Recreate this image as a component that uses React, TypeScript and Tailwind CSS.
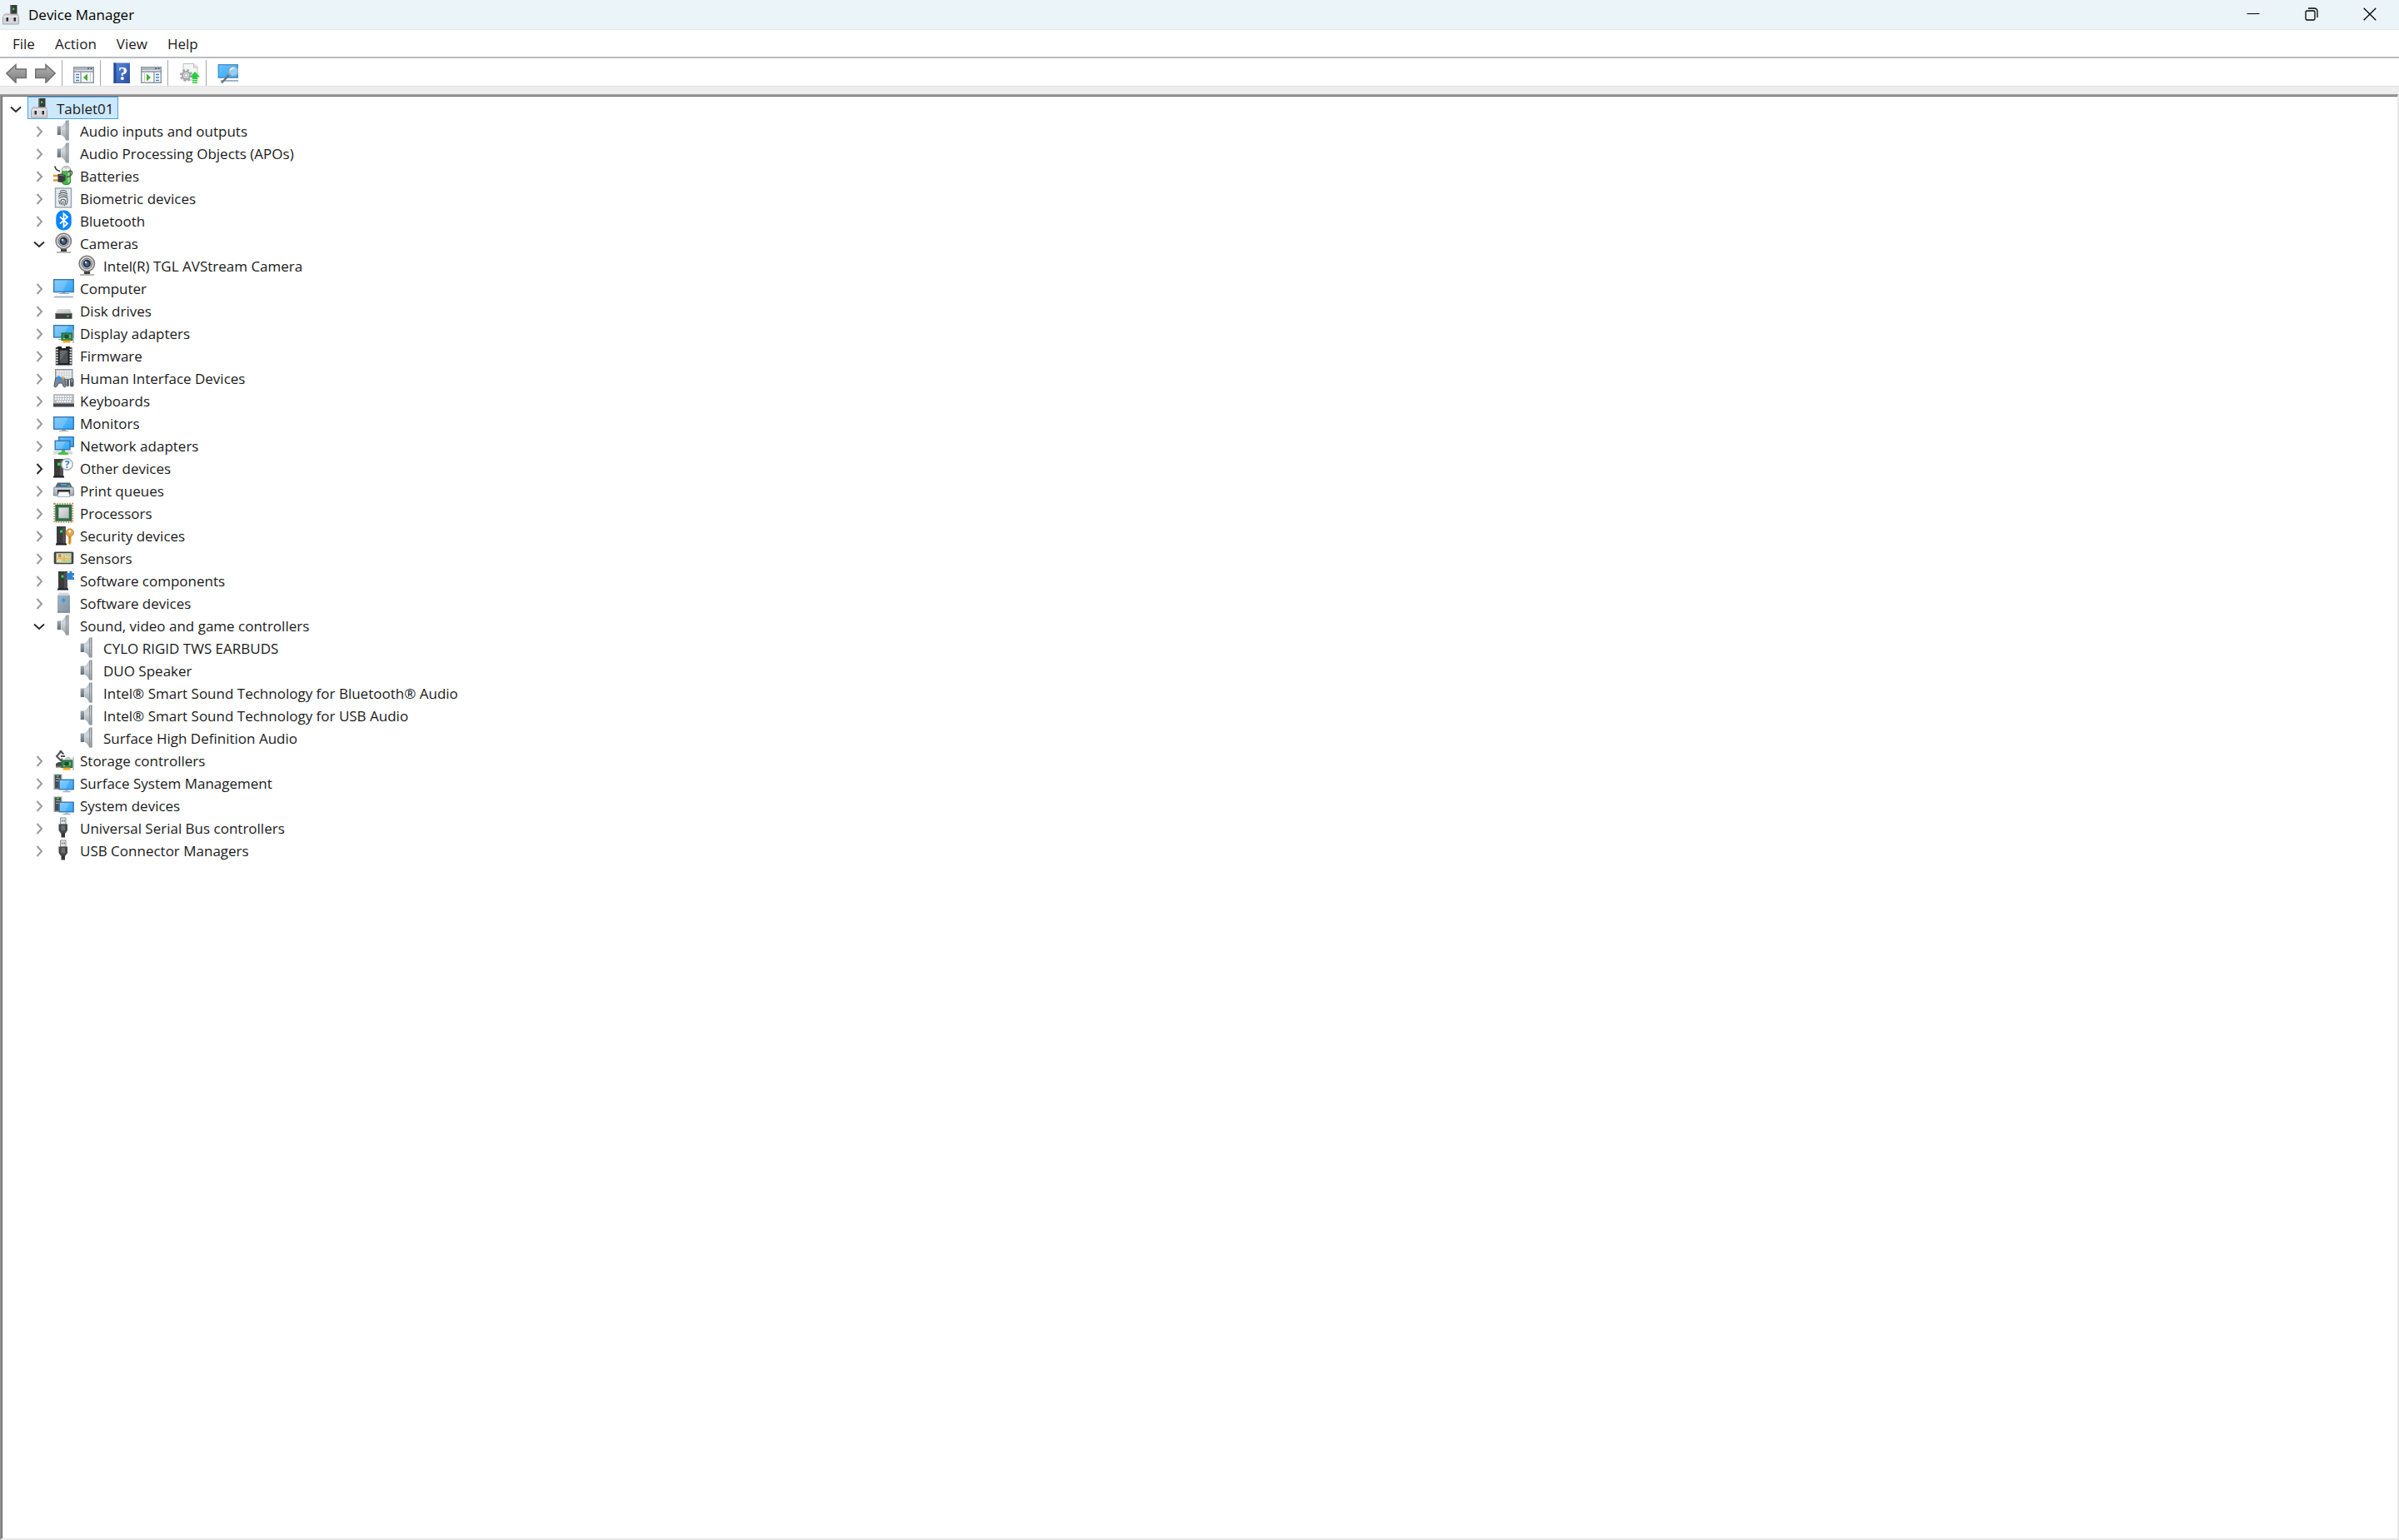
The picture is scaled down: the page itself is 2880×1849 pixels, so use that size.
import { useState } from 'react';
import type { ReactNode } from 'react';
import clsx from 'clsx';

type IconName =
  | 'root' | 'speaker' | 'battery' | 'biometric' | 'bluetooth' | 'camera' | 'computer' | 'disk'
  | 'display' | 'firmware' | 'hid' | 'keyboard' | 'monitor' | 'network' | 'other' | 'printer'
  | 'processor' | 'security' | 'sensor' | 'component' | 'software' | 'storage' | 'system' | 'usb';

type Device = {
  label: string;
  icon: IconName;
  children?: string[];
  attention?: boolean;
};

const devices: Device[] = [
  { label: 'Audio inputs and outputs',           icon: 'speaker' },
  { label: 'Audio Processing Objects (APOs)',    icon: 'speaker' },
  { label: 'Batteries',                          icon: 'battery' },
  { label: 'Biometric devices',                  icon: 'biometric' },
  { label: 'Bluetooth',                          icon: 'bluetooth' },
  { label: 'Cameras',                            icon: 'camera', children: ['Intel(R) TGL AVStream Camera'] },
  { label: 'Computer',                           icon: 'computer' },
  { label: 'Disk drives',                        icon: 'disk' },
  { label: 'Display adapters',                   icon: 'display' },
  { label: 'Firmware',                           icon: 'firmware' },
  { label: 'Human Interface Devices',            icon: 'hid' },
  { label: 'Keyboards',                          icon: 'keyboard' },
  { label: 'Monitors',                           icon: 'monitor' },
  { label: 'Network adapters',                   icon: 'network' },
  { label: 'Other devices',                      icon: 'other', attention: true },
  { label: 'Print queues',                       icon: 'printer' },
  { label: 'Processors',                         icon: 'processor' },
  { label: 'Security devices',                   icon: 'security' },
  { label: 'Sensors',                            icon: 'sensor' },
  { label: 'Software components',                icon: 'component' },
  { label: 'Software devices',                   icon: 'software' },
  {
    label: 'Sound, video and game controllers',
    icon: 'speaker',
    children: [
      'CYLO RIGID TWS EARBUDS',
      'DUO Speaker',
      'Intel® Smart Sound Technology for Bluetooth® Audio',
      'Intel® Smart Sound Technology for USB Audio',
      'Surface High Definition Audio'
    ]
  },
  { label: 'Storage controllers',                icon: 'storage' },
  { label: 'Surface System Management',          icon: 'system' },
  { label: 'System devices',                     icon: 'system' },
  { label: 'Universal Serial Bus controllers',   icon: 'usb' },
  { label: 'USB Connector Managers',             icon: 'usb' }
];

const tower = (
  <>
    <rect x="1" y="2" width="11" height="21" fill="#3b3b3d" />
    <rect x="8" y="3" width="4" height="20" fill="#505053" />
    <rect x="0" y="22.5" width="13" height="2" fill="#1d1d1f" />
  </>
);

const card = (
  <>
    <rect x="10" y="13" width="13" height="8.5" fill="#2f8a4c" stroke="#1f6338" />
    <rect x="13.5" y="15" width="5" height="4" fill="#244a38" />
    <path d="M12 19.5h2M20 15v4" stroke="#a7d8b0" />
    <rect x="11.5" y="21.5" width="9" height="3" fill="#f5a81c" />
    <path d="M24 9v16" stroke="#a9adb1" strokeWidth="1.4" />
  </>
);

const icons: Record<IconName, ReactNode> = {
  root: (
    <>
      <rect x="10" y="1" width="8.5" height="12" fill="#3a3a3c" />
      <path d="M10 1h1.5v12H10z" fill="#77797c" />
      <rect x="13" y="4.5" width="2.4" height="2.4" fill="#1be034" />
      <path d="M3.5 12h15.500l1.500 3.500v8.500H1.500v-8.500z" fill="#d6d6d9" stroke="#a6a7aa" />
      <path d="M2 15h18" stroke="#f4f4f6" />
      <path d="M5.500 16h2.500v4.500H5.500zM14.500 16h2.500v4.500h-2.500z" fill="#2e2f32" />
    </>
  ),
  speaker: (
    <>
      <rect x="4.7" y="7.5" width="5" height="10.5" fill="url(#steel)" />
      <path d="M9.500 7.500c3-1.500 4.500-4 5.500-7h3.500v24H15c-1-3-2.500-5.500-5.500-6.500z" fill="url(#cone)" />
      <path d="M15.500 1v23" stroke="#8b949c" />
      <path d="M17.800.5v24" stroke="#89929a" strokeWidth="1.4" />
      <path d="M9.500 7.500V18" stroke="#e1e5e8" strokeWidth=".7" />
    </>
  ),
  battery: (
    <>
      <rect x="10.5" y="3" width="10" height="20.5" rx="3.5" fill="#46b648" stroke="#2b8a32" />
      <path d="M10.500 7V5a5 3.500 0 0 1 10 0v2.500h-10z" fill="#e9eeec" stroke="#8c9893" />
      <ellipse cx="15.5" cy="3" rx="3.5" ry="1.4" fill="#c3ccc8" />
      <path d="M17.500 9h2v12h-2z" fill="#9be39a" />
      <path d="M2 1.500c.5 4 2 5.500 6 6" fill="none" stroke="#3d3d3d" strokeWidth="1.8" />
      <path d="M16 14.500c4 0 7-2.500 6.500-6-1-2.500-4-1.500-4 .5" fill="none" stroke="#4d4d4d" strokeWidth="1.5" />
      <path d="M0 13h6M0 18.500h6" stroke="#e3952b" strokeWidth="2.4" />
      <path d="M5.500 11l4-.5 5 2v6l-4 2.500-5-.5z" fill="#3a3a3b" />
      <path d="M7 12.500l3-.5 3 1.500" fill="none" stroke="#8b8b8c" />
    </>
  ),
  biometric: (
    <>
      <rect x="2.5" y="1" width="19" height="23" fill="#e4eaee" stroke="#93a6b3" strokeWidth="1.4" />
      <g fill="none" stroke="#54595d" strokeWidth="1.1">
        <path d="M8 5c2-2 6-2 8 0M6.500 8c3-2.500 8-2.500 10.500 0M6 11c3-3 9-3 11.500 0" />
        <path d="M6.500 13.500c3-3.500 10-3 10.500.5 0 3-.5 5-1.500 7" />
        <path d="M8 20c-1-2-1.500-3-1-4.500M9.500 21c0-2-.5-3-.5-4.500 0-3 5.500-3 5.500 0 0 2-.5 4-1 5.500M11.700 16.500v5" />
      </g>
    </>
  ),
  bluetooth: (
    <>
      <rect x="3.3" y=".5" width="18.4" height="24" rx="8.5" fill="#0a84ff" />
      <path d="M8 8.300l9 8.200-4.500 4V4.500L17 8.500l-9 8.200" fill="none" stroke="#fff" strokeWidth="1.8" />
    </>
  ),
  camera: (
    <>
      <path d="M9 19h7v4H9z" fill="#3c3c3c" />
      <path d="M4 24h17" stroke="#8e8e8e" strokeWidth="1.3" />
      <circle cx="12.3" cy="10.5" r="9.2" fill="#d9d9d9" stroke="#7a7a7a" strokeWidth="1.6" />
      <circle cx="12.3" cy="10.5" r="6.3" fill="#b9b9b9" stroke="#6c6c6c" />
      <circle cx="12.3" cy="10.5" r="4.7" fill="#27303c" />
      <circle cx="12.3" cy="10.8" r="2.6" fill="#3f679c" />
      <circle cx="11" cy="9" r="1.3" fill="#c6dcf5" />
    </>
  ),
  computer: (
    <>
      <rect x=".7" y="2.7" width="23.6" height="14.8" fill="url(#screen)" stroke="#3b76ab" strokeWidth="1.4" />
      <path d="M1.500 3.500H18l-7 13.300H1.500z" fill="#fff" opacity=".18" />
      <path d="M10.500 18.500h4M6.500 19.500h12.500" stroke="#8fa9bf" strokeWidth="1.2" />
      <path d="M1.500 22.500h22l1 2H.5z" fill="#a5b8cb" />
    </>
  ),
  disk: (
    <>
      <path d="M5 11h15l2.500 6H2.500z" fill="url(#lid)" />
      <rect x="2.5" y="16" width="20" height="6.8" fill="#3d3f41" />
      <path d="M2.500 16.500h20" stroke="#6f7173" />
      <rect x="16.5" y="18.5" width="2" height="2" fill="#2de04c" />
    </>
  ),
  display: (
    <>
      <rect x=".7" y="3.7" width="23.6" height="14.3" fill="url(#screen)" stroke="#3b76ab" strokeWidth="1.4" />
      <path d="M1.500 4.500H18l-7 12.800H1.500z" fill="#fff" opacity=".18" />
      <path d="M6 20.500h6" stroke="#8fa9bf" strokeWidth="1.2" />
      {card}
    </>
  ),
  firmware: (
    <>
      <path d="M5 2h5v2h5V2h5v22.500H5z" fill="#1f2021" />
      <path d="M4 3v21.500M21.300 3v21.500" stroke="#3b3d3f" strokeWidth="2.4" />
      <path d="M4.500 5v19M20.800 5v19" stroke="#e4e6e7" strokeWidth="2.6" strokeDasharray="1.6 1.6" />
      <path d="M7.500 6.500h10v15.500h-10z" fill="#505254" />
      <path d="M8 7h9l-9 12z" fill="#77797b" opacity=".6" />
    </>
  ),
  hid: (
    <>
      <rect x="2.5" y="2.5" width="20.5" height="12" fill="#c3c8cc" stroke="#8a9096" />
      <path d="M4.500 5.500h17M4.500 8.500h17M4.500 11.500h17" stroke="#fff" strokeWidth="1.8" strokeDasharray="2 1" />
      <path d="M1 22l1.500-8c.5-2 3-2.500 4-1h3c1-1.500 4-1 4.500 1l1 8c0 2-2 2.500-3 .5L10.500 19h-4L4 23c-1 1.500-3 1-3-1z" fill="#7d8893" stroke="#4b545d" />
      <path d="M5 10l4 1.500 1 4.500-4 1z" fill="#2b96ef" />
      <circle cx="12" cy="13" r="1.6" fill="#f5a020" />
      <rect x="15.5" y="14" width="3.5" height="9" rx="1.5" fill="#5d6771" />
      <rect x="20" y="13" width="4.5" height="10.5" rx="1.8" fill="#4f5963" />
      <path d="M22.200 14v4" stroke="#c4ccd3" />
    </>
  ),
  keyboard: (
    <>
      <rect x="0" y="5" width="25" height="13" fill="#b9bec3" />
      <path d="M2 8h21M2 11h21M4 14h17" stroke="#f7f8f9" strokeWidth="2" strokeDasharray="2 1" />
      <rect x="0" y="16.5" width="25" height="4" fill="#44484c" />
    </>
  ),
  monitor: (
    <>
      <rect x=".7" y="5.7" width="23.6" height="14.5" fill="url(#screen)" stroke="#3b76ab" strokeWidth="1.4" />
      <path d="M1.500 6.500H18l-7 13H1.500z" fill="#fff" opacity=".18" />
      <path d="M10 21.500h5M7 22.500h11" stroke="#8fa9bf" strokeWidth="1.2" />
    </>
  ),
  network: (
    <>
      <rect x="6.7" y="2.7" width="17.6" height="11.5" fill="url(#screen)" stroke="#3b76ab" strokeWidth="1.4" />
      <path d="M0 21.500h23" stroke="#d6d9db" strokeWidth="4" />
      <path d="M10 18h4v2.500l4 1.500v2H6v-2l4-1.500z" fill="#4bbf4b" />
      <rect x="2.2" y="7.2" width="17.8" height="10.6" fill="url(#screen)" stroke="#3b76ab" strokeWidth="1.4" />
      <path d="M3 8h12l-5 9H3z" fill="#fff" opacity=".18" />
    </>
  ),
  other: (
    <>
      {tower}
      <rect x="5" y="6.5" width="3.5" height="3.5" fill="#27e33c" />
      <circle cx="16.5" cy="8.5" r="6.7" fill="#fdfdfe" stroke="#a9aeb3" strokeWidth="1.5" />
      <text x="16.5" y="13" textAnchor="middle" className="fill-[#2f7dd1] text-[12px] font-bold">?</text>
    </>
  ),
  printer: (
    <>
      <path d="M5 3.500h15l3 6H2z" fill="#566472" />
      <path d="M9 5h7v2H9z" fill="#31a8e0" />
      <path d="M17 7.500h3" stroke="#31d456" strokeWidth="1.5" />
      <path d="M1 9h23l.5 10H.5z" fill="url(#steelLight)" stroke="#7b8691" />
      <path d="M5 12h15v5H5z" fill="#2c3035" />
      <path d="M6.500 14.500h12l1.500 6H5z" fill="#f4f5f6" stroke="#7b8691" strokeWidth=".6" />
    </>
  ),
  processor: (
    <>
      <rect x="1.3" y="1.8" width="22" height="22" fill="none" stroke="#c58a3c" strokeWidth="2" strokeDasharray="1.5 1.5" />
      <rect x="2.3" y="2.8" width="20" height="20" fill="#2d6b4c" />
      <rect x="6.5" y="6.500" width="12" height="12.500" fill="url(#lid)" stroke="#9fb0a6" strokeWidth=".8" />
    </>
  ),
  security: (
    <>
      <g transform="translate(3 0)">{tower}</g>
      <rect x="8" y="6.5" width="3" height="3" fill="#27e33c" />
      <path d="M18 13h3.500v8l-1.500 3.500-2-2z" fill="#e0a33c" />
      <circle cx="19.8" cy="9.5" r="4.7" fill="#e3aa4a" stroke="#b87f28" strokeWidth=".8" />
      <circle cx="19.8" cy="8" r="1.5" fill="#fff" />
      <path d="M20 14v8" stroke="#b87f28" />
    </>
  ),
  sensor: (
    <>
      <rect x=".7" y="5.5" width="23.6" height="14.8" rx="1.5" fill="#3f4244" />
      <rect x="3.5" y="7.2" width="18" height="11.5" fill="#dcdcae" />
      <path d="M10 14.500h11.500v4H10zM15 7.200h6.500v4H15z" fill="#b5d3a0" />
      <path d="M3.500 13.500h18M13 7.200v11.500" stroke="#eeb04f" strokeWidth="1.5" />
      <rect x="6" y="8.5" width="3.5" height="3.5" fill="#b98a63" />
    </>
  ),
  component: (
    <>
      <g transform="translate(5 0)">{tower}</g>
      <rect x="9.5" y="6.5" width="3" height="3" fill="#27e33c" />
      <path d="M16 4h3.500c-1.500-3.500 4-3.500 3 0H25v3c-2.500-.5-2.500 2.500 0 2v3h-9V9.500c2 .5 2-2.500 0-2z" fill="#2f83d8" />
    </>
  ),
  software: (
    <>
      <path d="M5 4l2-3.500h11L20 4v20.500H5z" fill="url(#steelLight)" />
      <path d="M5 4h15v20.500H5z" fill="url(#case)" />
      <path d="M12.300 6.800l2.800 3-2.800 3-2.800-3z" fill="#27a1f5" />
      <path d="M5 24h15" stroke="#6e7f8e" />
    </>
  ),
  storage: (
    <>
      <path d="M3 17l3-2h6v6H3z" fill="#4a4c4e" />
      <path d="M3 21h9" stroke="#8c8f92" strokeWidth="1.5" />
      <path d="M12.500 5.500L9 2.500 4 8l5 5 2-2M9 8h5" fill="none" stroke="#505254" strokeWidth="2" />
      <circle cx="9" cy="2.500" r="1.700" fill="#505254" />
      <path d="M13 13c1-5 6-6 9-2l.5 3z" fill="#c8cdcc" />
      {card}
    </>
  ),
  system: (
    <>
      <rect x=".5" y="2.5" width="10" height="18.5" fill="#9c9fa2" />
      <rect x="2" y="3.5" width="7" height="16" fill="#4a4c4f" />
      <path d="M3 7.500h5M3 10.500h5" stroke="#a9abad" />
      <rect x="4" y="4" width="2.5" height="1.7" fill="#27e33c" />
      <rect x="7.2" y="9.2" width="17" height="11.5" fill="url(#screen)" stroke="#3b76ab" strokeWidth="1.4" />
      <path d="M8 10h11.500L15 20H8z" fill="#fff" opacity=".18" />
      <path d="M14 22h4M11.500 23.500h9" stroke="#9db8cf" strokeWidth="1.3" />
    </>
  ),
  usb: (
    <>
      <rect x="8.5" y="1" width="6.5" height="8" fill="#e3e5e6" stroke="#8c8e90" />
      <path d="M10 3.500h1.300v2H10zM12.500 3.500h1.300v2h-1.300z" fill="#6a6c6e" />
      <path d="M6.500 8.500H17V16l-2.500 3.500H9L6.500 16z" fill="#47494b" />
      <path d="M9.500 10h4.500v6H9.500z" fill="#6d7072" />
      <path d="M9.500 19h4.500v5.500H9.500z" fill="#343537" />
    </>
  )
};

const toolbar: { label: string; divided?: boolean; art: ReactNode }[] = [
  {
    label: 'Back',
    art: <path d="M.8 13L12 2.800V8h12.300v10.500H12v5.700z" fill="url(#arrow)" stroke="#6f6f6f" strokeWidth="1.5" />
  },
  {
    label: 'Forward',
    art: <path d="M24.200 13L13 2.800V8H.7v10.500H13v5.700z" fill="url(#arrow)" stroke="#6f6f6f" strokeWidth="1.5" />
  },
  {
    label: 'Show/Hide Console Tree',
    divided: true,
    art: (
      <>
        <rect x=".7" y="5.7" width="23.6" height="18.6" fill="#f7f9fa" stroke="#8994a0" strokeWidth="1.4" />
        <path d="M1 7.500h23" stroke="#a9b4c0" strokeWidth="3.5" />
        <path d="M17 7.300h2M20.500 7.300h2" stroke="#4b5661" strokeWidth="1.5" />
        <path d="M1 11h23M9 11v13.500" stroke="#8994a0" strokeWidth="1.3" />
        <path d="M3 14.500h4M3 18h4M3 21.500h4" stroke="#3f7fc4" strokeWidth="1.5" />
        <path d="M17 13.500v9l-5-4.500z" fill="#43b02c" />
        <path d="M20.500 11v13.500" stroke="#c4ccd3" />
      </>
    )
  },
  {
    label: 'Help',
    divided: true,
    art: (
      <>
        <rect x="2.5" y=".5" width="19.5" height="24.5" fill="url(#book)" />
        <path d="M2.500.5h3V25h-3z" fill="#244c96" />
        <text x="13.5" y="20.5" textAnchor="middle" className="fill-white font-['Liberation_Serif'] text-[23px] font-bold">?</text>
      </>
    )
  },
  {
    label: 'Show/Hide Action Pane',
    art: (
      <>
        <rect x=".7" y="5.7" width="23.6" height="18.6" fill="#f7f9fa" stroke="#8994a0" strokeWidth="1.4" />
        <path d="M1 7.500h23" stroke="#a9b4c0" strokeWidth="3.5" />
        <path d="M17 7.300h2M20.500 7.300h2" stroke="#4b5661" strokeWidth="1.5" />
        <path d="M1 11h23M16 11v13.500" stroke="#8994a0" strokeWidth="1.3" />
        <path d="M18 14.500h4M18 18h4M18 21.500h4" stroke="#3f7fc4" strokeWidth="1.5" />
        <path d="M7 13.500v9l5-4.500z" fill="#43b02c" />
        <path d="M4.500 11v13.500" stroke="#c4ccd3" />
      </>
    )
  },
  {
    label: 'Update device driver',
    divided: true,
    art: (
      <>
        <path d="M5 1.500h13l4 4V21H5z" fill="#f5f5f5" stroke="#c0c0c0" />
        <path d="M17.500 1.500v4.500H22" fill="#e2e2e2" stroke="#c0c0c0" />
        <circle cx="8.5" cy="15.5" r="6.3" fill="none" stroke="#a3a6a9" strokeWidth="2.6" strokeDasharray="2.6 2.350" />
        <circle cx="8.5" cy="15.5" r="4.5" fill="#e3e4e5" stroke="#a3a6a9" strokeWidth="2" />
        <circle cx="8.5" cy="15.5" r="2" fill="#fff" stroke="#a3a6a9" />
        <path d="M19 11l6 6.500h-3V20h-6v-2.500h-3zM16 21h6v1.500h-6zM16 23.500h6V25h-6z" fill="#27d03a" />
      </>
    )
  },
  {
    label: 'Scan for hardware changes',
    divided: true,
    art: (
      <>
        <rect x="1.200" y="2.7" width="23.2" height="15.5" fill="url(#screen)" stroke="#3b8ac9" strokeWidth="1.2" />
        <path d="M4 22h21" stroke="#9fb6cb" strokeWidth="2" />
        <path d="M14 15L5 24.500" stroke="#69747f" strokeWidth="2.4" />
        <circle cx="19" cy="10.5" r="6" fill="#8fd0f8" stroke="#8ea5b8" strokeWidth="1.6" />
        <path d="M15.500 9.500c1-2.500 3-3 5-2.500" fill="none" stroke="#e9f8ff" strokeWidth="1.5" />
      </>
    )
  }
];

const menus = ['File', 'Action', 'View', 'Help'];

function Gradients() {
  return (
    <svg className="absolute size-0" aria-hidden="true">
      <defs>
        <linearGradient id="screen" x1="0" y1="0" x2="1" y2="1">
          <stop offset="0" stopColor="#6fc3fb" />
          <stop offset="1" stopColor="#2ba4fb" />
        </linearGradient>
        <linearGradient id="steel" x1="0" y1="0" x2="0" y2="1">
          <stop offset="0" stopColor="#9ba6b0" />
          <stop offset="1" stopColor="#626e7b" />
        </linearGradient>
        <linearGradient id="steelLight" x1="0" y1="0" x2="0" y2="1">
          <stop offset="0" stopColor="#d5dbe1" />
          <stop offset="1" stopColor="#9aa6b2" />
        </linearGradient>
        <linearGradient id="cone" x1="0" y1="0" x2="0" y2="1">
          <stop offset="0" stopColor="#b4bbc1" />
          <stop offset=".4" stopColor="#d3d7da" />
          <stop offset="1" stopColor="#949ca4" />
        </linearGradient>
        <linearGradient id="lid" x1="0" y1="0" x2="1" y2="1">
          <stop offset="0" stopColor="#e8e8e8" />
          <stop offset="1" stopColor="#b5b7b9" />
        </linearGradient>
        <linearGradient id="case" x1="0" y1="0" x2="1" y2="1">
          <stop offset="0" stopColor="#a5b3bf" />
          <stop offset="1" stopColor="#8293a2" />
        </linearGradient>
        <linearGradient id="arrow" x1="0" y1="0" x2="0" y2="1">
          <stop offset="0" stopColor="#b4b4b4" />
          <stop offset="1" stopColor="#7c7c7c" />
        </linearGradient>
        <linearGradient id="book" x1="0" y1="0" x2="1" y2="1">
          <stop offset="0" stopColor="#5a8be0" />
          <stop offset="1" stopColor="#274f9f" />
        </linearGradient>
      </defs>
    </svg>
  );
}

function Art({ children }: { children: ReactNode }) {
  return (
    <svg viewBox="0 0 25 25" className="size-[25px] shrink-0" aria-hidden="true">
      {children}
    </svg>
  );
}

function Row({
  label,
  icon,
  selected,
  open,
  dark,
  onToggle,
  onSelect
}: {
  label: string;
  icon: IconName;
  selected: boolean;
  open?: boolean;
  dark?: boolean;
  onToggle?: () => void;
  onSelect: () => void;
}) {
  return (
    <div className="flex h-[27px] items-center">
      {onToggle ? (
        <button
          onClick={onToggle}
          aria-label={`Toggle ${label}`}
          className={clsx('flex w-7 shrink-0 justify-center pt-0.5', open || dark ? 'text-[#2b2b2b]' : 'text-[#9b9b9b]')}
        >
          <svg viewBox="0 0 14 14" className="size-3.5" fill="none" stroke="currentColor" strokeWidth="2">
            {open ? <path d="M1 4.500l6 5.500 6-5.500" /> : <path d="M4.500 1l5.500 6-5.500 6" />}
          </svg>
        </button>
      ) : (
        <span className="w-7 shrink-0" />
      )}
      <button
        onClick={onSelect}
        className={clsx(
          'flex h-full items-center gap-[7px] border pr-1 pl-0.5 whitespace-nowrap',
          selected ? 'border-[#4ba3e3] bg-[#cce8ff]' : 'border-transparent'
        )}
      >
        <Art>{icons[icon]}</Art>
        <span className="pt-0.5">{label}</span>
      </button>
    </div>
  );
}

export default function App() {
  const [rootOpen, setRootOpen] = useState(true);
  const [expanded, setExpanded] = useState<string[]>(['Cameras', 'Sound, video and game controllers']);
  const [selected, setSelected] = useState('Tablet01');

  function toggle(label: string) {
    setExpanded(prev => (prev.includes(label) ? prev.filter(l => l !== label) : [...prev, label]));
  }

  return (
    <div className="flex min-h-screen flex-col bg-white font-['Open_Sans','Noto_Sans',sans-serif] text-[17px] leading-6 text-[#1a1a1a]">
      <Gradients />

      <header className="flex h-9 items-center border-b border-[#e3e6e8] bg-[#ebf4f8] pl-0.5">
        <Art>{icons.root}</Art>
        <h1 className="ml-[7px] flex-1 text-black">Device Manager</h1>
        <div className="flex h-full pb-0.5 text-black">
          <button aria-label="Minimize" className="flex w-[70px] items-center justify-center">
            <svg viewBox="0 0 16 16" className="size-4" stroke="currentColor" fill="none"><path d="M.5 7.500h15" /></svg>
          </button>
          <button aria-label="Restore" className="flex w-[70px] items-center justify-center">
            <svg viewBox="0 0 16 16" className="size-4" stroke="currentColor" fill="none" strokeWidth="1.3">
              <rect x="1" y="4" width="11" height="11" rx="1.5" />
              <path d="M4 1h7.500a3.500 3.500 0 0 1 3.500 3.500V12" />
            </svg>
          </button>
          <button aria-label="Close" className="flex w-[70px] items-center justify-center">
            <svg viewBox="0 0 16 16" className="size-4" stroke="currentColor" strokeWidth="1.3"><path d="M.7.7l14.600 14.600M15.300.7L.7 15.300" /></svg>
          </button>
        </div>
      </header>

      <nav className="flex h-[34px] items-center border-b-2 border-[#b9bec1] pt-0.5 pl-[3px]">
        {menus.map(menu => (
          <button key={menu} className="px-3">{menu}</button>
        ))}
      </nav>

      <div className="flex h-[33px] items-center pt-0.5 pl-0.5">
        {toolbar.map(item => (
          <div key={item.label} className="flex h-full items-center">
            {item.divided && <span className="mr-2 ml-0.5 h-full w-px bg-[#a8a8a8]" />}
            <button aria-label={item.label} title={item.label} className="px-[5px]">
              <Art>{item.art}</Art>
            </button>
          </div>
        ))}
      </div>

      <div className="h-2.5 border-t border-[#e0e0e0] bg-[#eeeeee]" />

      <main className="flex flex-1 flex-col border-2 border-t-[#a0a0a0] border-r-[#e8e8e8] border-b-[#e8e8e8] border-l-[#8f8f8f]">
        <div className="flex-1 border-t border-l border-[#696969] pl-0.5">
          <Row
            label="Tablet01"
            icon="root"
            open={rootOpen}
            selected={selected === 'Tablet01'}
            onToggle={() => setRootOpen(!rootOpen)}
            onSelect={() => setSelected('Tablet01')}
          />
          {rootOpen && (
            <ul className="pl-7">
              {devices.map(device => {
                const open = expanded.includes(device.label);
                return (
                  <li key={device.label}>
                    <Row
                      label={device.label}
                      icon={device.icon}
                      open={open}
                      dark={device.attention}
                      selected={selected === device.label}
                      onToggle={() => toggle(device.label)}
                      onSelect={() => setSelected(device.label)}
                    />
                    {open && device.children && (
                      <ul className="pl-7">
                        {device.children.map(child => (
                          <li key={child}>
                            <Row
                              label={child}
                              icon={device.icon}
                              selected={selected === child}
                              onSelect={() => setSelected(child)}
                            />
                          </li>
                        ))}
                      </ul>
                    )}
                  </li>
                );
              })}
            </ul>
          )}
        </div>
      </main>
    </div>
  );
}
